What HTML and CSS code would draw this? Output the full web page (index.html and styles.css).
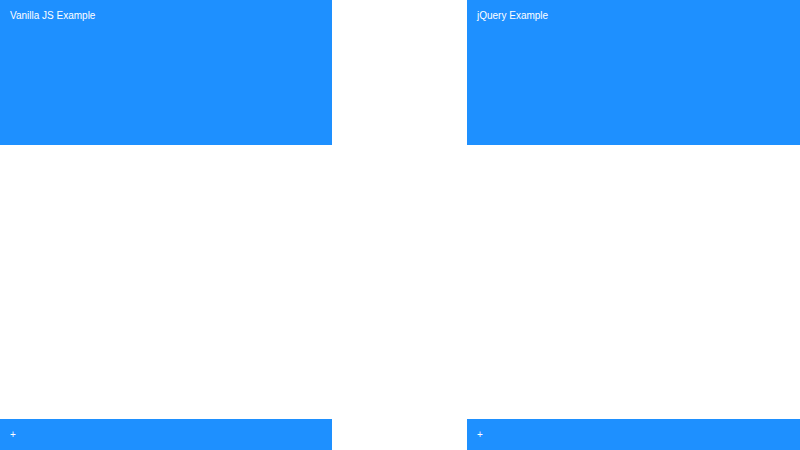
FILE: index.html
```html
<!DOCTYPE html>
<html>
<head>
<meta charset="utf-8">
<link rel="stylesheet" href="styles.css">
</head>
<body>
<div class="page">
  <section class="panel">
    <header class="panel-head">Vanilla JS Example</header>
    <div class="panel-body"></div>
    <footer class="panel-foot">+</footer>
  </section>
  <section class="panel">
    <header class="panel-head">jQuery Example</header>
    <div class="panel-body"></div>
    <footer class="panel-foot">+</footer>
  </section>
</div>
</body>
</html>
```
FILE: styles.css
```css
html, body {
  margin: 0;
  padding: 0;
  background: #ffffff;
}
body {
  font-family: "Liberation Sans", Arial, sans-serif;
  font-size: 10px;
  color: #ffffff;
}
.page {
  display: flex;
  justify-content: space-between;
  height: 450px;
  width: 800px;
}
.panel {
  width: 332px;
  display: flex;
  flex-direction: column;
  background: #ffffff;
}
.panel:last-child {
  width: 333px;
}
.panel-head {
  height: 145px;
  box-sizing: border-box;
  padding: 10px 10px;
  background: #1e90ff;
  line-height: 12px;
}
.panel-body {
  flex: 1;
}
.panel-foot {
  height: 31px;
  box-sizing: border-box;
  padding: 0 10px;
  background: #1e90ff;
  display: flex;
  align-items: center;
  line-height: 12px;
}
```
